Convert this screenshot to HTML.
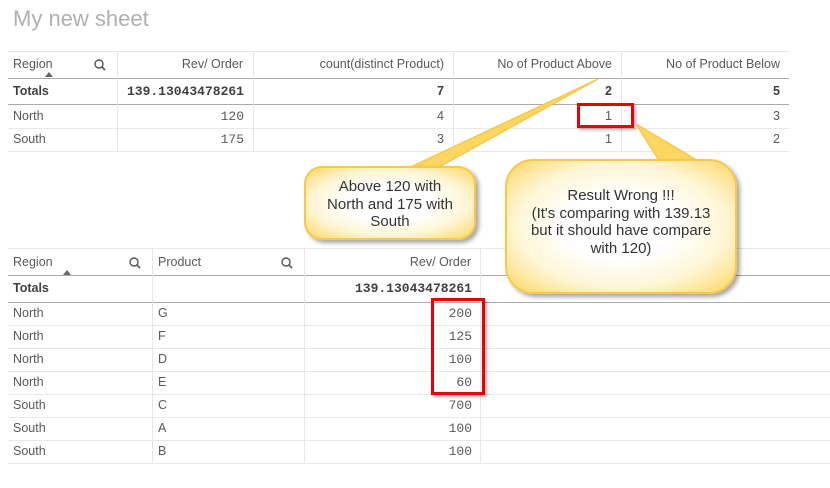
<!DOCTYPE html>
<html><head><meta charset="utf-8"><style>
*{margin:0;padding:0;box-sizing:border-box}
body{width:830px;height:488px;background:#fff;position:relative;overflow:hidden;font-family:"Liberation Sans",sans-serif;color:#595959}
.a{position:absolute}
.t{position:absolute;font-size:12.5px;white-space:nowrap}
.r{text-align:right}
.m{font-family:"Liberation Mono",monospace;font-size:13px}
.b{font-weight:bold;color:#404040}
.hl{position:absolute;height:1px;background:#e8e8e8}
.vl{position:absolute;width:1px;background:#e6e6e6}
.dk{background:#aaa}
.callout{position:absolute;border:2px solid #f7c84a;background:radial-gradient(ellipse at center,#fff 35%,#fff6d6 65%,#fcd661 100%);box-shadow:3px 3px 4px rgba(0,0,0,.35);text-align:center;color:#333;font-size:15px;line-height:17.5px}
.red{position:absolute;border:3px solid #e8000b;box-shadow:2px 2px 3px rgba(0,0,0,.3)}
</style></head><body>
<div class="t" style="left:13px;top:6px;font-size:22px;color:#b0b0b0">My new sheet</div>

<div class="hl" style="left:8px;width:781px;top:51px"></div>
<div class="hl dk" style="left:8px;width:781px;top:78px"></div>
<div class="hl dk" style="left:8px;width:781px;top:104px"></div>
<div class="hl" style="left:8px;width:781px;top:128px"></div>
<div class="hl" style="left:8px;width:781px;top:151px"></div>
<div class="vl" style="left:117px;top:51px;height:100px"></div>
<div class="vl" style="left:253px;top:51px;height:100px"></div>
<div class="vl" style="left:453px;top:51px;height:100px"></div>
<div class="vl" style="left:621px;top:51px;height:100px"></div>
<div class="t" style="left:13px;top:57px">Region</div>
<div class="a" style="left:45px;top:72px;width:0;height:0;border-left:4px solid transparent;border-right:4px solid transparent;border-bottom:5px solid #666"></div>
<svg class="a" style="left:94px;top:59px" width="12" height="12"><circle cx="5" cy="5" r="4" fill="none" stroke="#555" stroke-width="1.4"/><line x1="8" y1="8" x2="11" y2="11" stroke="#555" stroke-width="1.6"/></svg>
<div class="t r" style="right:587px;top:57px">Rev/ Order</div>
<div class="t r" style="right:386px;top:57px">count(distinct Product)</div>
<div class="t r" style="right:218px;top:57px">No of Product Above</div>
<div class="t r" style="right:50px;top:57px">No of Product Below</div>
<div class="t b" style="left:13px;top:84px">Totals</div>
<div class="t r b m" style="right:586px;top:84px">139.13043478261</div>
<div class="t r b" style="right:386px;top:84px">7</div>
<div class="t r b" style="right:218px;top:84px">2</div>
<div class="t r b" style="right:50px;top:84px">5</div>
<div class="t" style="left:13px;top:109px">North</div>
<div class="t r m" style="right:586px;top:109px">120</div>
<div class="t r" style="right:386px;top:109px">4</div>
<div class="t r" style="right:218px;top:109px">1</div>
<div class="t r" style="right:50px;top:109px">3</div>
<div class="t" style="left:13px;top:132px">South</div>
<div class="t r m" style="right:586px;top:132px">175</div>
<div class="t r" style="right:386px;top:132px">3</div>
<div class="t r" style="right:218px;top:132px">1</div>
<div class="t r" style="right:50px;top:132px">2</div>

<div class="hl" style="left:8px;width:822px;top:248px"></div>
<div class="hl dk" style="left:8px;width:822px;top:275px"></div>
<div class="hl dk" style="left:8px;width:822px;top:302px"></div>
<div class="hl" style="left:8px;width:822px;top:325px"></div>
<div class="hl" style="left:8px;width:822px;top:348px"></div>
<div class="hl" style="left:8px;width:822px;top:371px"></div>
<div class="hl" style="left:8px;width:822px;top:394px"></div>
<div class="hl" style="left:8px;width:822px;top:417px"></div>
<div class="hl" style="left:8px;width:822px;top:440px"></div>
<div class="hl" style="left:8px;width:822px;top:463px"></div>
<div class="vl" style="left:152px;top:248px;height:215px"></div>
<div class="vl" style="left:304px;top:248px;height:215px"></div>
<div class="vl" style="left:480px;top:248px;height:215px"></div>
<div class="t" style="left:13px;top:255px">Region</div>
<div class="a" style="left:63px;top:270px;width:0;height:0;border-left:4px solid transparent;border-right:4px solid transparent;border-bottom:5px solid #666"></div>
<svg class="a" style="left:129px;top:257px" width="12" height="12"><circle cx="5" cy="5" r="4" fill="none" stroke="#555" stroke-width="1.4"/><line x1="8" y1="8" x2="11" y2="11" stroke="#555" stroke-width="1.6"/></svg>
<div class="t" style="left:158px;top:255px">Product</div>
<svg class="a" style="left:281px;top:257px" width="12" height="12"><circle cx="5" cy="5" r="4" fill="none" stroke="#555" stroke-width="1.4"/><line x1="8" y1="8" x2="11" y2="11" stroke="#555" stroke-width="1.6"/></svg>
<div class="t r" style="right:359px;top:255px">Rev/ Order</div>
<div class="t b" style="left:13px;top:281px">Totals</div>
<div class="t r b m" style="right:358px;top:281px">139.13043478261</div>
<div class="t" style="left:13px;top:306px">North</div><div class="t" style="left:158px;top:306px">G</div><div class="t r m" style="right:358px;top:306px">200</div>
<div class="t" style="left:13px;top:329px">North</div><div class="t" style="left:158px;top:329px">F</div><div class="t r m" style="right:358px;top:329px">125</div>
<div class="t" style="left:13px;top:352px">North</div><div class="t" style="left:158px;top:352px">D</div><div class="t r m" style="right:358px;top:352px">100</div>
<div class="t" style="left:13px;top:375px">North</div><div class="t" style="left:158px;top:375px">E</div><div class="t r m" style="right:358px;top:375px">60</div>
<div class="t" style="left:13px;top:398px">South</div><div class="t" style="left:158px;top:398px">C</div><div class="t r m" style="right:358px;top:398px">700</div>
<div class="t" style="left:13px;top:421px">South</div><div class="t" style="left:158px;top:421px">A</div><div class="t r m" style="right:358px;top:421px">100</div>
<div class="t" style="left:13px;top:444px">South</div><div class="t" style="left:158px;top:444px">B</div><div class="t r m" style="right:358px;top:444px">100</div>

<div class="red" style="left:577px;top:103px;width:57px;height:25px"></div>
<div class="red" style="left:431px;top:298px;width:54px;height:97px"></div>

<svg class="a" style="left:0;top:0" width="830" height="488">
<polygon points="598,79 400,172 430,172" fill="#fcd661" stroke="#f7c84a" stroke-width="1.5"/>
<polygon points="636,124 660,162 700,162" fill="#fcd661" stroke="#f7c84a" stroke-width="1.5"/>
</svg>
<div class="callout" style="left:304px;top:166px;width:172px;height:74px;border-radius:18px;padding-top:10px">Above 120 with<br>North and 175 with<br>South</div>
<div class="callout" style="left:505px;top:159px;width:232px;height:135px;border-radius:28px;padding-top:26px">Result Wrong !!!<br>(It's comparing with 139.13<br>but it should have compare<br>with 120)</div>
</body></html>
